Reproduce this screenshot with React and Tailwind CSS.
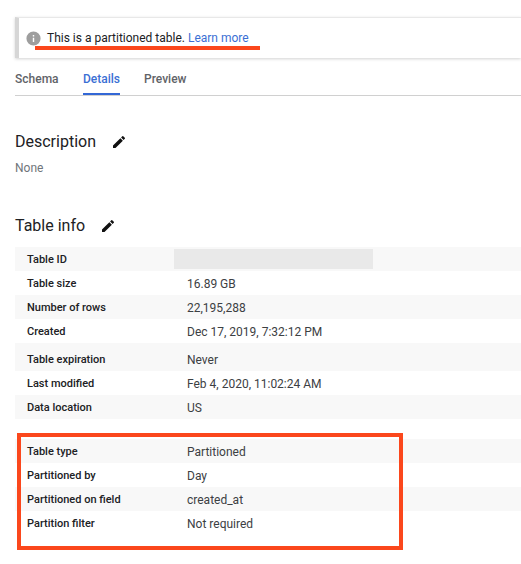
const Pencil = ({ className }) => (
  <svg viewBox="0 0 24 24" className={className} fill="#111">
    <path d="M3 17.25V21h3.75L17.81 9.94l-3.75-3.75L3 17.25zM20.71 7.04a1 1 0 0 0 0-1.41l-2.34-2.34a1 1 0 0 0-1.41 0l-1.83 1.83 3.75 3.75 1.83-1.83z" />
  </svg>
);

const Row = ({ label, value, shaded, tall, blank }) => (
  <div className={`flex items-center ${tall ? "h-7 pt-1" : "h-6"} ${shaded ? "bg-[#f8f8f8]" : "bg-white"}`}>
    <div className="w-[172px] pl-3 pt-[2px] shrink-0 text-[11px] font-medium text-[#202124]">{label}</div>
    {blank ? (
      <div className="w-[199px] h-5 -ml-[13px] bg-[#e9e9e9]" />
    ) : (
      <div className="pt-[2px] text-[12px] text-[#3c4043]">{value}</div>
    )}
  </div>
);

export default function App() {
  return (
    <div className="relative w-[521px] h-[564px] overflow-hidden bg-white pl-[15px] pt-[17px] font-['Roboto',sans-serif]">
      <div className="h-[41px] flex items-center border-t border-[#e8e8e8] border-l-4 border-l-[#d6d6d6] shadow-[0_1px_3px_rgba(0,0,0,0.18)] pl-[6px]">
        <svg viewBox="0 0 24 24" className="w-[17px] h-[17px]" fill="#9e9e9e">
          <path d="M12 2a10 10 0 1 0 0 20 10 10 0 0 0 0-20zm1 15h-2v-6h2v6zm0-8h-2V7h2v2z" />
        </svg>
        <span className="ml-[5px] text-[12px] text-[#202124]">
          This is a partitioned table. <span className="text-[#3b6fd4]">Learn more</span>
        </span>
      </div>
      <div className="flex h-[37px] border-b border-[#d0d0d0] text-[12px] font-medium mt-px">
        <div className="pt-[11px] w-[68px] text-[#5f6368]">Schema</div>
        <div className="pt-[11px] w-[61px] text-[#3b6fd4] relative">
          Details
          <div className="absolute left-0 bottom-0 w-[37px] h-0.5 bg-[#3367d6]" />
        </div>
        <div className="pt-[11px] text-[#5f6368]">Preview</div>
      </div>
      <div className="flex items-center mt-[34px] h-6">
        <h2 className="text-[16px] text-[#202124]">Description</h2>
        <Pencil className="w-4 h-4 ml-[15px]" />
      </div>
      <div className="mt-[5px] text-[12px] text-[#70757a]">None</div>
      <div className="flex items-center mt-[37px] h-6">
        <h2 className="text-[16px] text-[#202124]">Table info</h2>
        <Pencil className="w-4 h-4 ml-[15px]" />
      </div>
      <div className="mt-[9px]">
        <Row label="Table ID" shaded blank />
        <Row label="Table size" value="16.89 GB" />
        <Row label="Number of rows" value="22,195,288" shaded />
        <Row label="Created" value="Dec 17, 2019, 7:32:12 PM" />
        <Row label="Table expiration" value="Never" shaded tall />
        <Row label="Last modified" value="Feb 4, 2020, 11:02:24 AM" />
        <Row label="Data location" value="US" shaded />
      </div>
      <div className="mt-5">
        <Row label="Table type" value="Partitioned" shaded />
        <Row label="Partitioned by" value="Day" />
        <Row label="Partitioned on field" value="created_at" shaded />
        <Row label="Partition filter" value="Not required" />
      </div>
      <div className="absolute left-[35px] top-[46px] w-[225px] h-1 bg-[#fb471c]" />
      <div className="absolute left-[17px] top-[433px] w-[386px] h-[117px] border-4 border-[#fb471c]" />
    </div>
  );
}
